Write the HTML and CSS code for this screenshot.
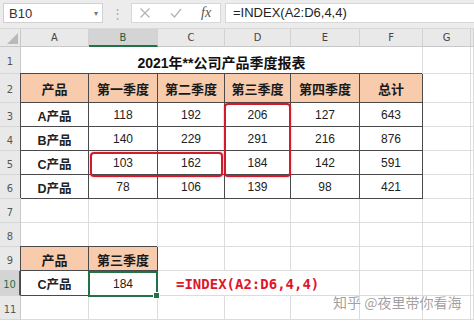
FILE: index.html
```html
<!DOCTYPE html>
<html lang="zh-CN">
<head>
    <meta charset="UTF-8">
    <title>INDEX</title>
    <link rel="stylesheet" href="styles.css">
</head>
<body>
    <div class="toolbar">
        <div class="namebox"><span>B10</span><span class="caret">&#9662;</span></div>
        <div class="dots">&#8942;</div>
        <div class="fxbox">
            <svg width="12" height="12" viewBox="0 0 12 12"><path d="M1.5 1.5 L10.5 10.5 M10.5 1.5 L1.5 10.5" stroke="#b4b4b4" stroke-width="1.3" fill="none"/></svg>
            <svg width="12" height="12" viewBox="0 0 12 12"><path d="M1 6.5 L4.5 10 L11 2" stroke="#b4b4b4" stroke-width="1.3" fill="none"/></svg>
            <span class="fx">fx</span>
        </div>
        <div class="formula">=INDEX(A2:D6,4,4)</div>
    </div>

    <div class="sheet">
        <!-- column headers -->
        <div class="corner"><svg width="11" height="11" viewBox="0 0 11 11"><path d="M11 0 L11 11 L0 11 Z" fill="#b9b9b9"/></svg></div>
        <div class="ch">A</div>
        <div class="ch sel">B</div>
        <div class="ch">C</div>
        <div class="ch">D</div>
        <div class="ch">E</div>
        <div class="ch">F</div>
        <div class="ch">G</div>
        <div class="ch"></div>

        <!-- row 1 -->
        <div class="rh">1</div>
        <div class="c title">2021年**公司产品季度报表</div>
        <div class="c"></div>
        <div class="c"></div>

        <!-- row 2 -->
        <div class="rh">2</div>
        <div class="c tb hd">产品</div>
        <div class="c tb hd">第一季度</div>
        <div class="c tb hd">第二季度</div>
        <div class="c tb hd">第三季度</div>
        <div class="c tb hd">第四季度</div>
        <div class="c tb hd">总计</div>
        <div class="c"></div>
        <div class="c"></div>

        <!-- row 3 -->
        <div class="rh">3</div>
        <div class="c tb name">A产品</div>
        <div class="c tb">118</div>
        <div class="c tb">192</div>
        <div class="c tb">206</div>
        <div class="c tb">127</div>
        <div class="c tb">643</div>
        <div class="c"></div>
        <div class="c"></div>

        <!-- row 4 -->
        <div class="rh">4</div>
        <div class="c tb name">B产品</div>
        <div class="c tb">140</div>
        <div class="c tb">229</div>
        <div class="c tb">291</div>
        <div class="c tb">216</div>
        <div class="c tb">876</div>
        <div class="c"></div>
        <div class="c"></div>

        <!-- row 5 -->
        <div class="rh">5</div>
        <div class="c tb name">C产品</div>
        <div class="c tb">103</div>
        <div class="c tb">162</div>
        <div class="c tb">184</div>
        <div class="c tb">142</div>
        <div class="c tb">591</div>
        <div class="c"></div>
        <div class="c"></div>

        <!-- row 6 -->
        <div class="rh">6</div>
        <div class="c tb name">D产品</div>
        <div class="c tb">78</div>
        <div class="c tb">106</div>
        <div class="c tb">139</div>
        <div class="c tb">98</div>
        <div class="c tb">421</div>
        <div class="c"></div>
        <div class="c"></div>

        <!-- row 7 -->
        <div class="rh">7</div>
        <div class="c"></div><div class="c"></div><div class="c"></div><div class="c"></div>
        <div class="c"></div><div class="c"></div><div class="c"></div><div class="c"></div>

        <!-- row 8 -->
        <div class="rh">8</div>
        <div class="c"></div><div class="c"></div><div class="c"></div><div class="c"></div>
        <div class="c"></div><div class="c"></div><div class="c"></div><div class="c"></div>

        <!-- row 9 -->
        <div class="rh">9</div>
        <div class="c tb hd">产品</div>
        <div class="c tb hd">第三季度</div>
        <div class="c"></div><div class="c"></div><div class="c"></div>
        <div class="c"></div><div class="c"></div><div class="c"></div>

        <!-- row 10 -->
        <div class="rh sel">10</div>
        <div class="c tb name">C产品</div>
        <div class="c tb">184</div>
        <div class="c note">=INDEX(A2:D6,4,4)</div>
        <div class="c"></div><div class="c"></div><div class="c"></div>

        <!-- row 11 -->
        <div class="rh">11</div>
        <div class="c"></div><div class="c"></div><div class="c"></div><div class="c"></div>
        <div class="c"></div><div class="c"></div><div class="c"></div><div class="c"></div>

        <!-- marks drawn over the grid -->
        <div class="mark mark-d"></div>
        <div class="mark mark-row"></div>
        <div class="cursor"></div>
        <div class="watermark">知乎 @夜里带你看海</div>
    </div>
</body>
</html>
```

FILE: styles.css
```css
body {
    margin: 0;
    width: 474px;
    height: 322px;
    overflow: hidden;
    background: #ffffff;
    font-family: "Liberation Sans", "Noto Sans CJK SC", sans-serif;
    color: #222;
}

/* formula bar */
.toolbar {
    height: 29px;
    box-sizing: border-box;
    background: #ececec;
    border-bottom: 1px solid #d8d8d8;
    display: flex;
    align-items: flex-start;
    padding: 3px 0 0 3px;
}
.namebox {
    width: 100px;
    height: 20px;
    box-sizing: border-box;
    background: #fff;
    border: 1px solid #d0d0d0;
    display: flex;
    align-items: center;
    justify-content: space-between;
    padding: 0 4px 0 5px;
    font-size: 13px;
    color: #333;
}
.caret {
    font-size: 8px;
    color: #777;
}
.dots {
    width: 28px;
    height: 20px;
    display: flex;
    align-items: center;
    justify-content: center;
    color: #b0b0b0;
    font-size: 13px;
}
.fxbox {
    width: 90px;
    height: 20px;
    box-sizing: border-box;
    background: #fff;
    border: 1px solid #d8d8d8;
    display: flex;
    align-items: center;
    gap: 19px;
    padding-left: 7px;
}
.fx {
    font-family: "Liberation Serif", serif;
    font-style: italic;
    font-size: 14px;
    color: #555;
}
.formula {
    flex: 1;
    margin-left: 4px;
    height: 20px;
    box-sizing: border-box;
    background: #fff;
    border: 1px solid #d8d8d8;
    border-right: none;
    padding-left: 7px;
    font-size: 13px;
    line-height: 18px;
    color: #222;
}

/* sheet grid */
.sheet {
    position: relative;
    display: grid;
    grid-template-columns: 21px 68px 69px 67px 66px 69px 63px 48px 1fr;
    grid-template-rows: 18px 27px 29px repeat(7, 24px) 25px 24px;
}
.sheet > div {
    box-sizing: border-box;
}
.corner {
    background: #e9e9e9;
    border-right: 1px solid #c8c8c8;
    border-bottom: 1px solid #c8c8c8;
    display: flex;
    align-items: flex-end;
    justify-content: flex-end;
    padding: 0 2px 2px 0;
}
.ch {
    background: #e9e9e9;
    border-right: 1px solid #d2d2d2;
    border-bottom: 1px solid #c8c8c8;
    display: flex;
    align-items: center;
    justify-content: center;
    font-family: "DejaVu Sans Condensed", "DejaVu Sans", sans-serif;
    font-size: 11px;
    color: #444;
}
.ch.sel {
    background: #d4d4d4;
    border-bottom: 2px solid #217346;
    color: #1d5b38;
}
.rh {
    background: #e9e9e9;
    border-right: 1px solid #c8c8c8;
    border-bottom: 1px solid #d6d6d6;
    display: flex;
    align-items: center;
    justify-content: center;
    padding-top: 3px;
    font-family: "DejaVu Sans Condensed", "DejaVu Sans", sans-serif;
    font-size: 11px;
    color: #555;
}
.rh.sel {
    background: #d4d4d4;
    border-right: 2px solid #217346;
    color: #217346;
}
.c {
    border-right: 1px solid #dcdcdc;
    border-bottom: 1px solid #dcdcdc;
    display: flex;
    align-items: center;
    justify-content: center;
    font-size: 12px;
    padding-top: 1px;
}
.title {
    grid-column: span 6;
    border-right: 1px solid #dcdcdc;
    font-size: 14px;
    font-weight: bold;
    color: #111;
    padding-top: 3px;
}
.tb {
    border-right: 1px solid #4a4a4a;
    border-bottom: 1px solid #4a4a4a;
    box-shadow: -1px -1px 0 #4a4a4a;
}
.hd {
    background: #f8cbad;
    font-size: 13px;
    font-weight: bold;
    color: #1a1a1a;
}
.name {
    font-weight: bold;
    font-size: 12.5px;
}
.note {
    grid-column: span 3;
    justify-content: flex-start;
    padding-left: 18px;
    font-family: "DejaVu Sans Mono", monospace;
    font-weight: bold;
    font-size: 14px;
    color: #e0152a;
}

/* overlays */
.mark {
    position: absolute;
    border: 2px solid #cf1b2b;
    border-radius: 4px;
    box-shadow: 0 0 2px rgba(200, 20, 30, 0.5);
}
.mark-d {
    left: 224px;
    top: 74px;
    width: 67px;
    height: 74px;
}
.mark-row {
    left: 90px;
    top: 123px;
    width: 133px;
    height: 25px;
}
.cursor {
    position: absolute;
    left: 88px;
    top: 242px;
    width: 70px;
    height: 26px;
    border: 2px solid #217346;
}
.cursor::after {
    content: "";
    position: absolute;
    right: -4px;
    bottom: -4px;
    width: 5px;
    height: 5px;
    background: #217346;
    border: 1px solid #fff;
}
.watermark {
    position: absolute;
    left: 333px;
    top: 263px;
    font-family: "Noto Sans CJK SC", sans-serif;
    font-size: 14px;
    color: rgba(130, 130, 130, 0.75);
    text-shadow: 0 0 1px #fff;
}
```
